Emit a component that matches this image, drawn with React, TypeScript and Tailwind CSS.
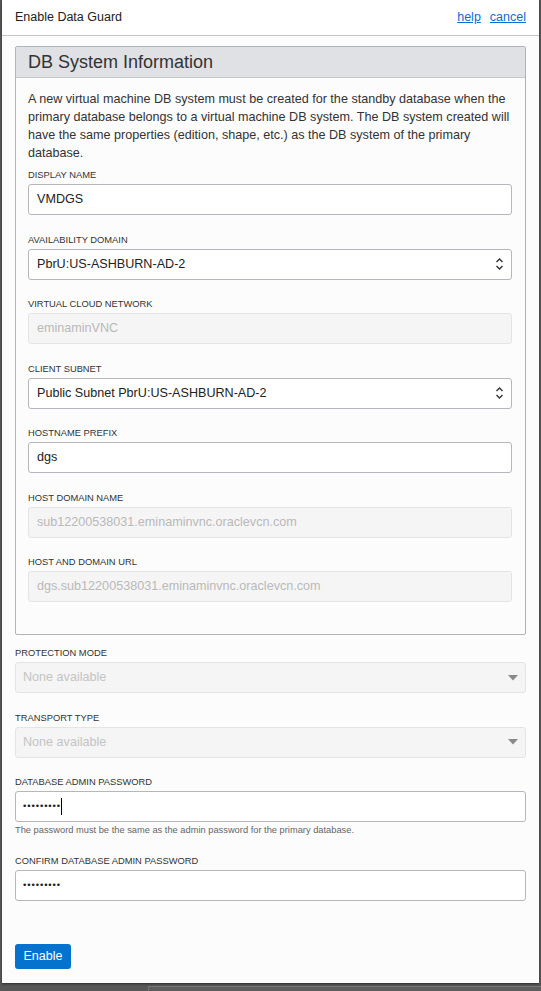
import React from "react";

const font = { fontFamily: '"Liberation Sans", Arial, sans-serif' };

const Label = ({ children }: { children: React.ReactNode }) => (
  <div className="h-[12.5px] mb-[2.5px] text-[9.35px] leading-[12.5px] uppercase text-[#333] whitespace-nowrap">{children}</div>
);

// text field inside the DB system box
const Field = ({ label, value, disabled }: { label: string; value: string; disabled?: boolean }) => (
  <div className="mb-[18.5px]">
    <Label>{label}</Label>
    <div
      className={`h-[31px] flex items-center px-[8px] rounded-[3px] border text-[12.6px] ${
        disabled ? "bg-[#f5f5f5] border-[#e3e4e6] text-[#b9b9b9]" : "bg-white border-[#b4b7bc] text-[#222]"
      }`}
    >
      {value}
    </div>
  </div>
);

// native looking select with up/down chevrons
const NativeSelect = ({ label, value }: { label: string; value: string }) => (
  <div className="mb-[18.5px]">
    <Label>{label}</Label>
    <div className="h-[31px] flex items-center justify-between pl-[8px] pr-[7px] rounded-[3px] border border-[#b4b7bc] bg-white text-[12.6px] text-[#222]">
      <span>{value}</span>
      <svg width="9" height="14" viewBox="0 0 9 14" fill="none" stroke="#333" strokeWidth="1.4">
        <path d="M1.5 5 L4.5 2 L7.5 5" />
        <path d="M1.5 9 L4.5 12 L7.5 9" />
      </svg>
    </div>
  </div>
);

// disabled jet-style select
const EmptySelect = ({ label }: { label: string }) => (
  <div className="mb-[18.5px]">
    <Label>{label}</Label>
    <div className="h-[31px] flex items-center justify-between pl-[7px] pr-[7px] rounded-[3px] border border-[#e3e4e6] bg-[#f5f5f5] text-[12.6px] text-[#c4c4c4]">
      <span>None available</span>
      <svg width="10" height="6" viewBox="0 0 10 6">
        <path d="M0 0 H10 L5 5.5 Z" fill="#8a8a8a" />
      </svg>
    </div>
  </div>
);

const Password = ({ caret }: { caret?: boolean }) => (
  <div className="h-[31px] flex items-center px-[7px] rounded-[3px] border border-[#b4b7bc] bg-white text-[9.5px] tracking-[0.9px] text-[#222]">
    <span>•••••••••</span>
    {caret && <span className="w-px h-[17px] bg-black" />}
  </div>
);

export default function App() {
  return (
    <div className="relative w-full h-[991px] bg-[#575757] overflow-hidden" style={font}>
      <div className="ml-[2px] w-[537px] h-[983px] bg-[#fcfcfc] flex flex-col shadow-[0_1px_2px_rgba(0,0,0,0.5)]">
        {/* title bar */}
        <div className="h-[36px] shrink-0 flex items-center justify-between pl-[13px] pr-[13px] border-b border-[#c3c5c9] bg-white">
          <span className="text-[12.5px] text-[#222]">Enable Data Guard</span>
          <div className="flex gap-[9px] text-[12.5px] text-[#0a6ed1] underline">
            <span>help</span>
            <span>cancel</span>
          </div>
        </div>

        <div className="flex-1 flex flex-col px-[13px] pt-[10px] pb-[14px]">
          {/* DB system box */}
          <div className="border border-[#b0b3b8] rounded-[2px]">
            <div className="h-[31px] flex items-center pl-[12px] bg-[#dfe1e4] border-b border-[#c5c8cc] text-[18px] text-[#333]">
              DB System Information
            </div>
            <div className="pl-[12px] pr-[13px] pt-[12px] pb-[32px]">
              <div className="text-[12.6px] leading-[18px] text-[#333] mb-[7px] whitespace-nowrap">
                <div>A new virtual machine DB system must be created for the standby database when the</div>
                <div>primary database belongs to a virtual machine DB system. The DB system created will</div>
                <div>have the same properties (edition, shape, etc.) as the DB system of the primary</div>
                <div>database.</div>
              </div>
              <Field label="Display Name" value="VMDGS" />
              <NativeSelect label="Availability Domain" value="PbrU:US-ASHBURN-AD-2" />
              <Field label="Virtual Cloud Network" value="eminaminVNC" disabled />
              <NativeSelect label="Client Subnet" value="Public Subnet PbrU:US-ASHBURN-AD-2" />
              <Field label="Hostname Prefix" value="dgs" />
              <Field label="Host Domain Name" value="sub12200538031.eminaminvnc.oraclevcn.com" disabled />
              <div>
                <Label>Host and Domain URL</Label>
                <div className="h-[31px] flex items-center px-[8px] rounded-[3px] border bg-[#f5f5f5] border-[#e3e4e6] text-[#b9b9b9] text-[12.6px]">
                  dgs.sub12200538031.eminaminvnc.oraclevcn.com
                </div>
              </div>
            </div>
          </div>

          <div className="mt-[12px]">
            <EmptySelect label="Protection Mode" />
            <EmptySelect label="Transport Type" />
            <div>
              <Label>Database Admin Password</Label>
              <Password caret />
              <div className="mt-[2px] text-[9.3px] leading-[12px] text-[#666]">
                The password must be the same as the admin password for the primary database.
              </div>
            </div>
            <div className="mt-[19px]">
              <Label>Confirm Database Admin Password</Label>
              <Password />
            </div>
          </div>

          <button className="mt-auto self-start h-[25px] px-[8.5px] rounded-[3px] bg-[#0572ce] text-white text-[12.5px] leading-none">
            Enable
          </button>
        </div>
      </div>
      <div className="absolute left-[148px] right-0 bottom-0 h-[5px] border-l border-t border-[#777] bg-[#5d5d5d]" />
    </div>
  );
}
